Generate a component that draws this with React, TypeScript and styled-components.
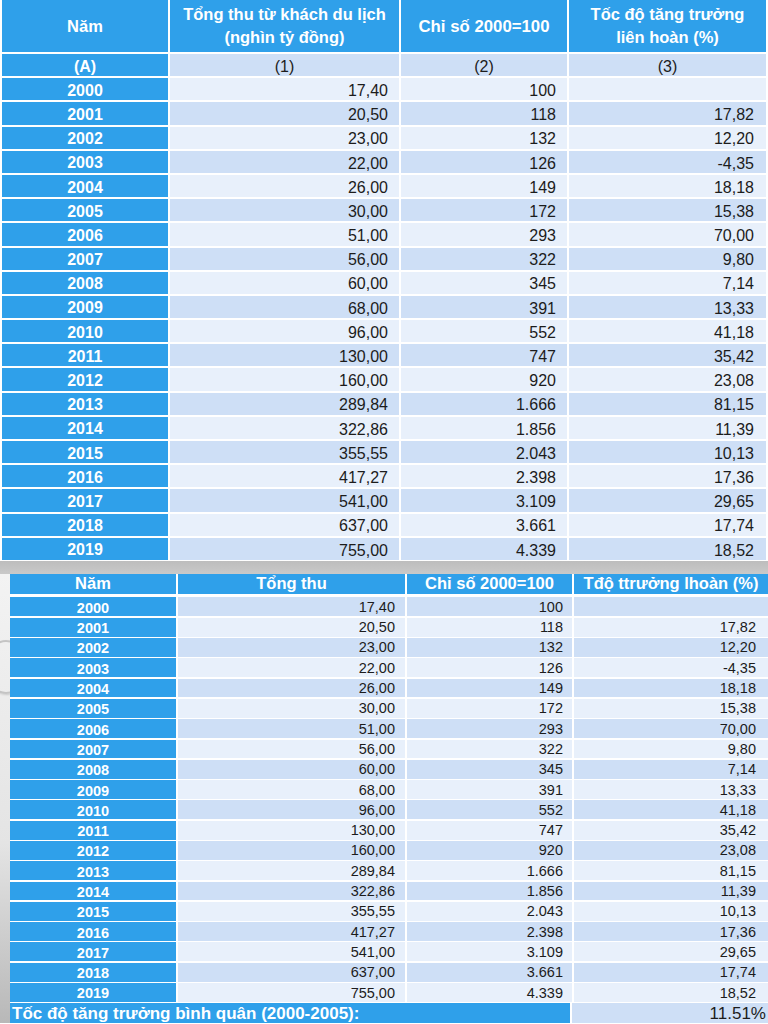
import React from "react";
import styled, { createGlobalStyle } from "styled-components";

const Global = createGlobalStyle`
  html, body { margin: 0; padding: 0; }
  body {
    width: 768px;
    height: 1024px;
    overflow: hidden;
    background: #ffffff;
    font-family: "Liberation Sans", Arial, sans-serif;
  }
`;

const BLUE = "#2FA0EA";
const DARK = "#CEDFF6";
const LIGHT = "#E8F0FB";

type RowData = { y: string; a: string; b: string; c: string };

const rows: RowData[] = [
  { y: "2000", a: "17,40", b: "100", c: "" },
  { y: "2001", a: "20,50", b: "118", c: "17,82" },
  { y: "2002", a: "23,00", b: "132", c: "12,20" },
  { y: "2003", a: "22,00", b: "126", c: "-4,35" },
  { y: "2004", a: "26,00", b: "149", c: "18,18" },
  { y: "2005", a: "30,00", b: "172", c: "15,38" },
  { y: "2006", a: "51,00", b: "293", c: "70,00" },
  { y: "2007", a: "56,00", b: "322", c: "9,80" },
  { y: "2008", a: "60,00", b: "345", c: "7,14" },
  { y: "2009", a: "68,00", b: "391", c: "13,33" },
  { y: "2010", a: "96,00", b: "552", c: "41,18" },
  { y: "2011", a: "130,00", b: "747", c: "35,42" },
  { y: "2012", a: "160,00", b: "920", c: "23,08" },
  { y: "2013", a: "289,84", b: "1.666", c: "81,15" },
  { y: "2014", a: "322,86", b: "1.856", c: "11,39" },
  { y: "2015", a: "355,55", b: "2.043", c: "10,13" },
  { y: "2016", a: "417,27", b: "2.398", c: "17,36" },
  { y: "2017", a: "541,00", b: "3.109", c: "29,65" },
  { y: "2018", a: "637,00", b: "3.661", c: "17,74" },
  { y: "2019", a: "755,00", b: "4.339", c: "18,52" },
];

const Page = styled.div`
  display: flex;
  flex-direction: column;
  width: 768px;
`;

/* ---------- top screenshot ---------- */
const TopSection = styled.section`
  background: #ffffff;
  padding: 0 0 1px 2px;
`;

const TopTable = styled.div`
  display: flex;
  flex-direction: column;
  gap: 2px;
  width: 764px;
`;

const TopRow = styled.div<{ $h: number }>`
  display: grid;
  grid-template-columns: 166px 229px 166px 197px;
  column-gap: 2px;
  height: ${(p) => p.$h}px;
`;

const Cell = styled.div<{
  $bg: string;
  $align?: "left" | "center" | "right";
  $pad?: number;
  $shift?: number;
}>`
  background: ${(p) => p.$bg};
  display: flex;
  align-items: center;
  justify-content: ${(p) =>
    p.$align === "right" ? "flex-end" : p.$align === "left" ? "flex-start" : "center"};
  padding: ${(p) => p.$shift ?? 0}px ${(p) => p.$pad ?? 11}px 0;
  overflow: hidden;
  white-space: nowrap;
`;

const HeadText = styled.span<{ $size: number }>`
  color: #ffffff;
  font-weight: 700;
  font-size: ${(p) => p.$size}px;
  line-height: 23px;
  text-align: center;
  white-space: nowrap;
`;

const YearText = styled.span<{ $size: number }>`
  color: #ffffff;
  font-weight: 700;
  font-size: ${(p) => p.$size}px;
`;

const DataText = styled.span<{ $size: number }>`
  color: #1c1c1c;
  font-size: ${(p) => p.$size}px;
  line-height: 1.1;
`;

/* ---------- divider ---------- */
const GreyBand = styled.div`
  height: 13px;
  background: linear-gradient(#bdbdbd, #c9c9c9);
`;

/* ---------- bottom screenshot ---------- */
const BottomSection = styled.section`
  position: relative;
  padding-left: 10px;
  background: linear-gradient(#f3f3f3 0%, #e4e4e4 60%, #b8b8b8 100%);
`;

const Ring = styled.div`
  position: absolute;
  left: -16px;
  top: 66px;
  width: 40px;
  height: 50px;
  border-radius: 50%;
  border: 2px solid #c4c4c4;
  box-shadow: 1px 1px 2px rgba(0, 0, 0, 0.15);
`;

const BottomTable = styled.div`
  position: relative;
  display: flex;
  flex-direction: column;
  gap: 1.5px;
  width: 758px;
  background: #ffffff;
`;

const BottomRow = styled.div<{ $h: number; $mb?: number }>`
  display: grid;
  grid-template-columns: 166px 227px 165px 1fr;
  column-gap: 2px;
  height: ${(p) => p.$h}px;
  margin-bottom: ${(p) => p.$mb ?? 0}px;
`;

const FooterRow = styled.div`
  display: grid;
  grid-template-columns: 560px 1fr;
  column-gap: 2px;
  height: 20px;
`;

const FooterLabel = styled.div`
  background: ${BLUE};
  color: #ffffff;
  font-weight: 700;
  font-size: 17px;
  line-height: 19px;
  display: flex;
  align-items: center;
  padding: 1px 0 0 2px;
  white-space: nowrap;
`;

const BottomHead = styled.span`
  color: #ffffff;
  font-weight: 700;
  font-size: 16.5px;
  line-height: 19px;
  white-space: nowrap;
  margin-top: -2px;
`;

export default function App() {
  return (
    <Page>
      <Global />
      <TopSection>
        <TopTable>
          <TopRow $h={52}>
            <Cell $bg={BLUE}>
              <HeadText $size={16.5}>Năm</HeadText>
            </Cell>
            <Cell $bg={BLUE}>
              <HeadText $size={16.5}>
                Tổng thu từ khách du lịch
                <br />
                (nghìn tỷ đồng)
              </HeadText>
            </Cell>
            <Cell $bg={BLUE}>
              <HeadText $size={16.8}>Chỉ số 2000=100</HeadText>
            </Cell>
            <Cell $bg={BLUE}>
              <HeadText $size={16.5}>
                Tốc độ tăng trưởng
                <br />
                liên hoàn (%)
              </HeadText>
            </Cell>
          </TopRow>
          <TopRow $h={22.2}>
            <Cell $bg={BLUE} $shift={3}>
              <YearText $size={16}>(A)</YearText>
            </Cell>
            <Cell $bg={DARK} $shift={3}>
              <DataText $size={16}>(1)</DataText>
            </Cell>
            <Cell $bg={DARK} $shift={3}>
              <DataText $size={16}>(2)</DataText>
            </Cell>
            <Cell $bg={DARK} $shift={3}>
              <DataText $size={16}>(3)</DataText>
            </Cell>
          </TopRow>
          {rows.map((r, i) => {
            const bg = i % 2 === 1 ? DARK : LIGHT;
            return (
              <TopRow $h={22.2} key={r.y}>
                <Cell $bg={BLUE} $shift={3}>
                  <YearText $size={16}>{r.y}</YearText>
                </Cell>
                <Cell $bg={bg} $align="right" $shift={3}>
                  <DataText $size={16}>{r.a}</DataText>
                </Cell>
                <Cell $bg={bg} $align="right" $shift={3}>
                  <DataText $size={16}>{r.b}</DataText>
                </Cell>
                <Cell $bg={bg} $align="right" $pad={12} $shift={3}>
                  <DataText $size={16}>{r.c}</DataText>
                </Cell>
              </TopRow>
            );
          })}
        </TopTable>
      </TopSection>
      <GreyBand />
      <BottomSection>
        <Ring />
        <BottomTable>
          <BottomRow $h={20.5} $mb={1.5}>
            <Cell $bg={BLUE}>
              <BottomHead>Năm</BottomHead>
            </Cell>
            <Cell $bg={BLUE}>
              <BottomHead>Tổng thu</BottomHead>
            </Cell>
            <Cell $bg={BLUE}>
              <BottomHead>Chỉ số 2000=100</BottomHead>
            </Cell>
            <Cell $bg={BLUE} $pad={2}>
              <BottomHead>Tđộ ttrưởng lhoàn (%)</BottomHead>
            </Cell>
          </BottomRow>
          {rows.map((r, i) => {
            const bg = i % 2 === 0 ? DARK : LIGHT;
            return (
              <BottomRow $h={18.8} key={r.y}>
                <Cell $bg={BLUE} $shift={2}>
                  <YearText $size={14.5}>{r.y}</YearText>
                </Cell>
                <Cell $bg={bg} $align="right" $pad={10} $shift={2}>
                  <DataText $size={14.5}>{r.a}</DataText>
                </Cell>
                <Cell $bg={bg} $align="right" $pad={9} $shift={2}>
                  <DataText $size={14.5}>{r.b}</DataText>
                </Cell>
                <Cell $bg={bg} $align="right" $pad={12} $shift={2}>
                  <DataText $size={14.5}>{r.c}</DataText>
                </Cell>
              </BottomRow>
            );
          })}
          <FooterRow>
            <FooterLabel>Tốc độ tăng trưởng bình quân (2000-2005):</FooterLabel>
            <Cell $bg={DARK} $align="right" $pad={2} $shift={1}>
              <DataText $size={17}>11.51%</DataText>
            </Cell>
          </FooterRow>
        </BottomTable>
      </BottomSection>
    </Page>
  );
}
